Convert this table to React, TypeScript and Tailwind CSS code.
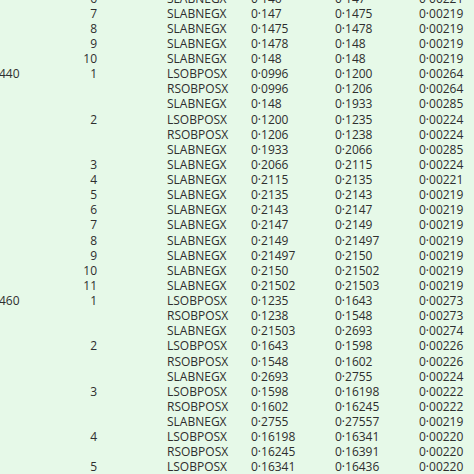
type Row = [string, string, string, string, string, string];

const rows: Row[] = [
	["", "6", "SLABNEGX", "0·146", "0·147", "0·00221"],
	["", "7", "SLABNEGX", "0·147", "0·1475", "0·00219"],
	["", "8", "SLABNEGX", "0·1475", "0·1478", "0·00219"],
	["", "9", "SLABNEGX", "0·1478", "0·148", "0·00219"],
	["", "10", "SLABNEGX", "0·148", "0·148", "0·00219"],
	["440", "1", "LSOBPOSX", "0·0996", "0·1200", "0·00264"],
	["", "", "RSOBPOSX", "0·0996", "0·1206", "0·00264"],
	["", "", "SLABNEGX", "0·148", "0·1933", "0·00285"],
	["", "2", "LSOBPOSX", "0·1200", "0·1235", "0·00224"],
	["", "", "RSOBPOSX", "0·1206", "0·1238", "0·00224"],
	["", "", "SLABNEGX", "0·1933", "0·2066", "0·00285"],
	["", "3", "SLABNEGX", "0·2066", "0·2115", "0·00224"],
	["", "4", "SLABNEGX", "0·2115", "0·2135", "0·00221"],
	["", "5", "SLABNEGX", "0·2135", "0·2143", "0·00219"],
	["", "6", "SLABNEGX", "0·2143", "0·2147", "0·00219"],
	["", "7", "SLABNEGX", "0·2147", "0·2149", "0·00219"],
	["", "8", "SLABNEGX", "0·2149", "0·21497", "0·00219"],
	["", "9", "SLABNEGX", "0·21497", "0·2150", "0·00219"],
	["", "10", "SLABNEGX", "0·2150", "0·21502", "0·00219"],
	["", "11", "SLABNEGX", "0·21502", "0·21503", "0·00219"],
	["460", "1", "LSOBPOSX", "0·1235", "0·1643", "0·00273"],
	["", "", "RSOBPOSX", "0·1238", "0·1548", "0·00273"],
	["", "", "SLABNEGX", "0·21503", "0·2693", "0·00274"],
	["", "2", "LSOBPOSX", "0·1643", "0·1598", "0·00226"],
	["", "", "RSOBPOSX", "0·1548", "0·1602", "0·00226"],
	["", "", "SLABNEGX", "0·2693", "0·2755", "0·00224"],
	["", "3", "LSOBPOSX", "0·1598", "0·16198", "0·00222"],
	["", "", "RSOBPOSX", "0·1602", "0·16245", "0·00222"],
	["", "", "SLABNEGX", "0·2755", "0·27557", "0·00219"],
	["", "4", "LSOBPOSX", "0·16198", "0·16341", "0·00220"],
	["", "", "RSOBPOSX", "0·16245", "0·16391", "0·00220"],
	["", "5", "LSOBPOSX", "0·16341", "0·16436", "0·00220"],
];

export default function App() {
	return (
		<div className="h-[474px] w-[474px] overflow-hidden bg-[#e6f9e8] font-['Open_Sans',sans-serif] text-[12px] leading-[15.13px] text-[#2e2e2e]">
			<div className="-mt-[9.5px]">
				{rows.map((r, i) => (
					<div key={i} className="flex h-[15.13px] whitespace-nowrap">
						<span className="w-[60px] -ml-px">{r[0]}</span>
						<span className="w-[38px] text-right">{r[1]}</span>
						<span className="ml-[70px] w-[84px]">{r[2]}</span>
						<span className="w-[84px]">{r[3]}</span>
						<span className="w-[84px]">{r[4]}</span>
						<span>{r[5]}</span>
					</div>
				))}
			</div>
		</div>
	);
}
